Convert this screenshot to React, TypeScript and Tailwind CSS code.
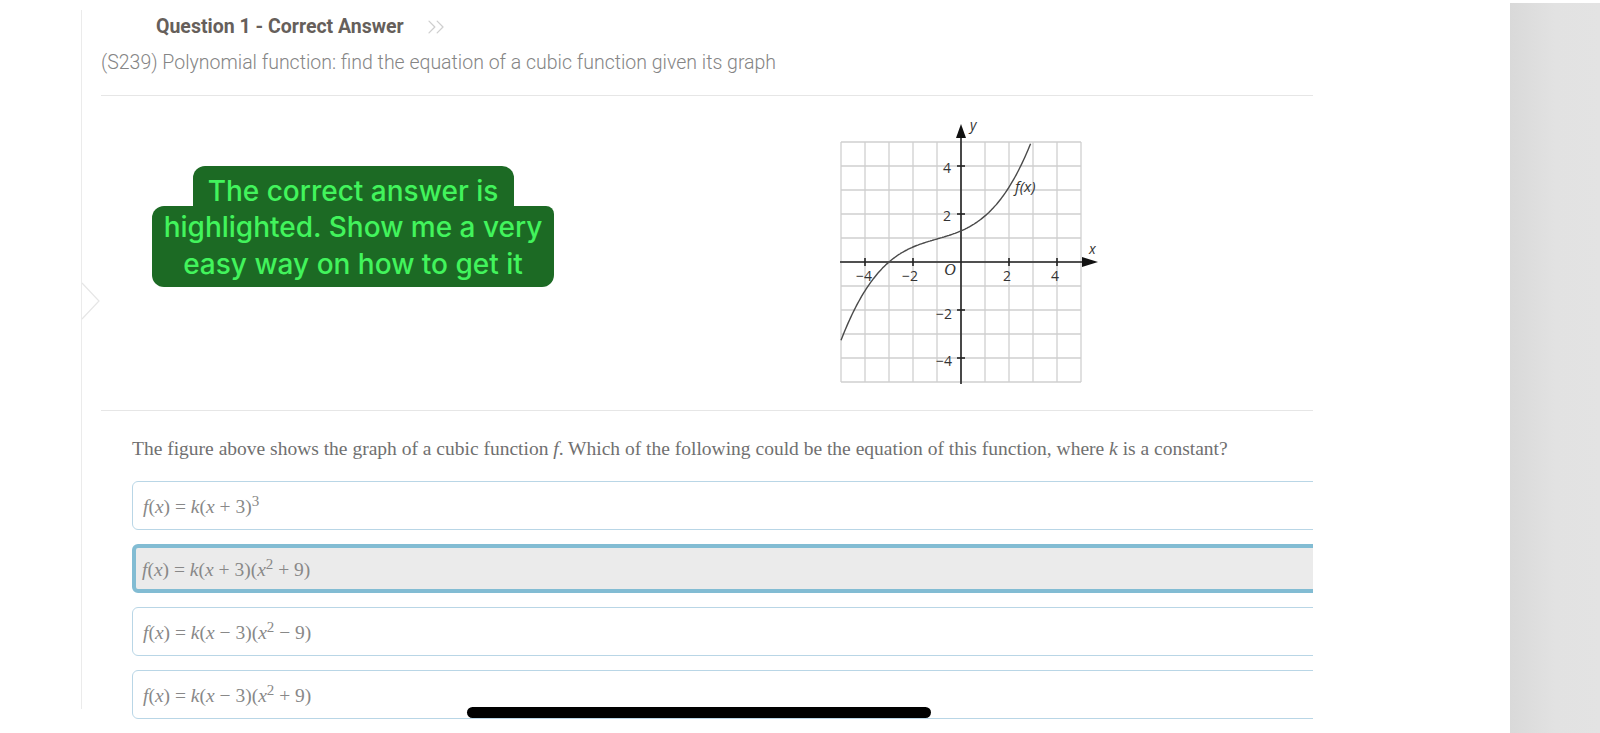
import { ChevronsRight } from 'lucide-react'

const options = [
  { key: 'a', sign: '+', tail: '3', rest: '', pow: false, selected: false },
  { key: 'b', sign: '+', tail: '2', rest: ' + 9)', pow: true, selected: true },
  { key: 'c', sign: '−', tail: '2', rest: ' − 9)', pow: true, selected: false },
  { key: 'd', sign: '−', tail: '2', rest: ' + 9)', pow: true, selected: false },
]

const cell = 24
const ox = 141
const oy = 152

function curvePath() {
  const pts: string[] = []
  for (let x = -5; x <= 2.93; x += 0.05) {
    const y = 0.048 * (x + 3) * (x * x + 9)
    pts.push(`${(ox + cell * x).toFixed(1)},${(oy - cell * y).toFixed(1)}`)
  }
  return 'M' + pts.join(' L')
}

function Graph() {
  const lines = Array.from({ length: 11 }, (_, i) => i)
  return (
    <svg width="300" height="290" viewBox="0 0 300 290" className="block">
      {lines.map((i) => (
        <g key={i} stroke="#cfcfcf" strokeWidth="1.3">
          <line x1={21 + i * cell} y1={32} x2={21 + i * cell} y2={272} />
          <line x1={21} y1={32 + i * cell} x2={261} y2={32 + i * cell} />
        </g>
      ))}
      <g stroke="#222" strokeWidth="1.6">
        <line x1={20} y1={oy} x2={262} y2={oy} />
        <line x1={ox} y1={28} x2={ox} y2={274} />
        {[-4, -2, 2, 4].map((t) => (
          <g key={t}>
            <line x1={ox + t * cell} y1={oy - 4} x2={ox + t * cell} y2={oy + 4} />
            <line x1={ox - 4} y1={oy - t * cell} x2={ox + 4} y2={oy - t * cell} />
          </g>
        ))}
      </g>
      <polygon points={`${ox},14 ${ox - 5},28 ${ox + 5},28`} fill="#111" />
      <polygon points={`278,${oy} 262,${oy - 5} 262,${oy + 5}`} fill="#111" />
      <path d={curvePath()} fill="none" stroke="#4a4a4a" strokeWidth="1.4" />
      <g fontFamily="'Open Sans', sans-serif" fontSize="14" fill="#333">
        <text x={44} y={171} textAnchor="middle">−4</text>
        <text x={90} y={171} textAnchor="middle">−2</text>
        <text x={187} y={171} textAnchor="middle">2</text>
        <text x={235} y={171} textAnchor="middle">4</text>
        <text x={127} y={63} textAnchor="middle">4</text>
        <text x={127} y={111} textAnchor="middle">2</text>
        <text x={124} y={209} textAnchor="middle">−2</text>
        <text x={124} y={256} textAnchor="middle">−4</text>
      </g>
      <g fontFamily="'Liberation Serif', serif" fontStyle="italic" fill="#333">
        <text x={130} y={165} fontSize="16" textAnchor="middle">O</text>
      </g>
      <g fontFamily="'Open Sans', sans-serif" fontStyle="italic" fill="#333" fontSize="14">
        <text x={150} y={20}>y</text>
        <text x={269} y={144}>x</text>
        <text x={195} y={82} fontSize="15">f(x)</text>
      </g>
    </svg>
  )
}

function Bubble() {
  return (
    <div className="absolute left-[152px] top-[166px] flex flex-col items-center font-['Inter',sans-serif] text-[28px] font-medium text-[#42f45c]">
      <div className="h-[40px] w-[321px] rounded-t-[12px] bg-[#1c6a24] pt-[8px] text-center leading-[34px]">
        The correct answer is
      </div>
      <div className="w-[402px] rounded-[12px] rounded-tr-[8px] bg-[#1c6a24] pb-[4px] pt-[3px] text-center leading-[37px]">
        <div>highlighted. Show me a very</div>
        <div>easy way on how to get it</div>
      </div>
    </div>
  )
}

export default function App() {
  return (
    <div className="relative flex h-[733px] w-[1600px] overflow-hidden bg-white">
      <main className="w-[1510px] pl-[81px] pt-[10px]">
        <div className="h-[699px] border-l border-[#ebebeb]">
          <div className="flex h-[29px] items-center gap-[18px] pl-[74px] pt-[4px] font-['Roboto',sans-serif] text-[19.5px] font-bold text-[#665f5b]">
            <span>Question 1 - Correct Answer</span>
            <ChevronsRight size={28} strokeWidth={1.1} className="text-[#cfcfcf]" />
          </div>
          <p className="mt-[13px] pl-[19px] font-['Roboto',sans-serif] text-[19.5px] font-light leading-[22px] text-[#858585]">
            (S239) Polynomial function: find the equation of a cubic function given its graph
          </p>
          <div className="ml-[19px] mr-[197px] mt-[21px] h-[316px] border-y border-[#e6e6e6] pl-[719px] pt-[14px]">
            <Graph />
          </div>
          <p className="mt-[26px] pl-[50px] font-['Liberation_Serif',serif] text-[19.5px] leading-[24px] text-[#707070]">
            The figure above shows the graph of a cubic function <i>f</i>. Which of the following could be the equation of this function, where <i>k</i> is a constant?
          </p>
          <div className="ml-[50px] mt-[20px] flex w-[1181px] flex-col gap-[14px] overflow-hidden">
            {options.map((o) => (
              <div
                key={o.key}
                className={
                  o.selected
                    ? 'flex h-[49px] w-[1200px] items-center rounded-[6px] border-[4px] border-[#82bcd3] bg-[#ebebeb] pl-[6px] pt-[3px] font-["Liberation_Serif",serif] text-[19.5px] text-[#888]'
                    : 'flex h-[49px] w-[1200px] items-center rounded-[6px] border border-[#b9d6e6] bg-white pl-[10px] pt-[3px] font-["Liberation_Serif",serif] text-[19.5px] text-[#888]'
                }
              >
                <span className="whitespace-pre">
                  <i>f</i>(<i>x</i>) = <i>k</i>(<i>x</i> {o.sign} 3)
                  {o.pow ? (
                    <>
                      (<i>x</i>
                      <sup className="text-[15px]">{o.tail}</sup>
                      {o.rest}
                    </>
                  ) : (
                    <sup className="text-[15px]">{o.tail}</sup>
                  )}
                </span>
              </div>
            ))}
          </div>
        </div>
      </main>
      <aside className="mt-[3px] w-[90px] bg-gradient-to-r from-[#d9d9d9] via-[#e2e2e2] to-[#e3e3e3]" />

      <Bubble />
      <svg width="22" height="38" viewBox="0 0 22 38" className="absolute left-[81px] top-[282px]">
        <path d="M1 1 L18 19 L1 37" fill="#fff" stroke="#e6e6e6" strokeWidth="1.2" />
      </svg>
      <div className="absolute left-[467px] top-[707px] h-[11px] w-[464px] rounded-full bg-black" />
    </div>
  )
}
